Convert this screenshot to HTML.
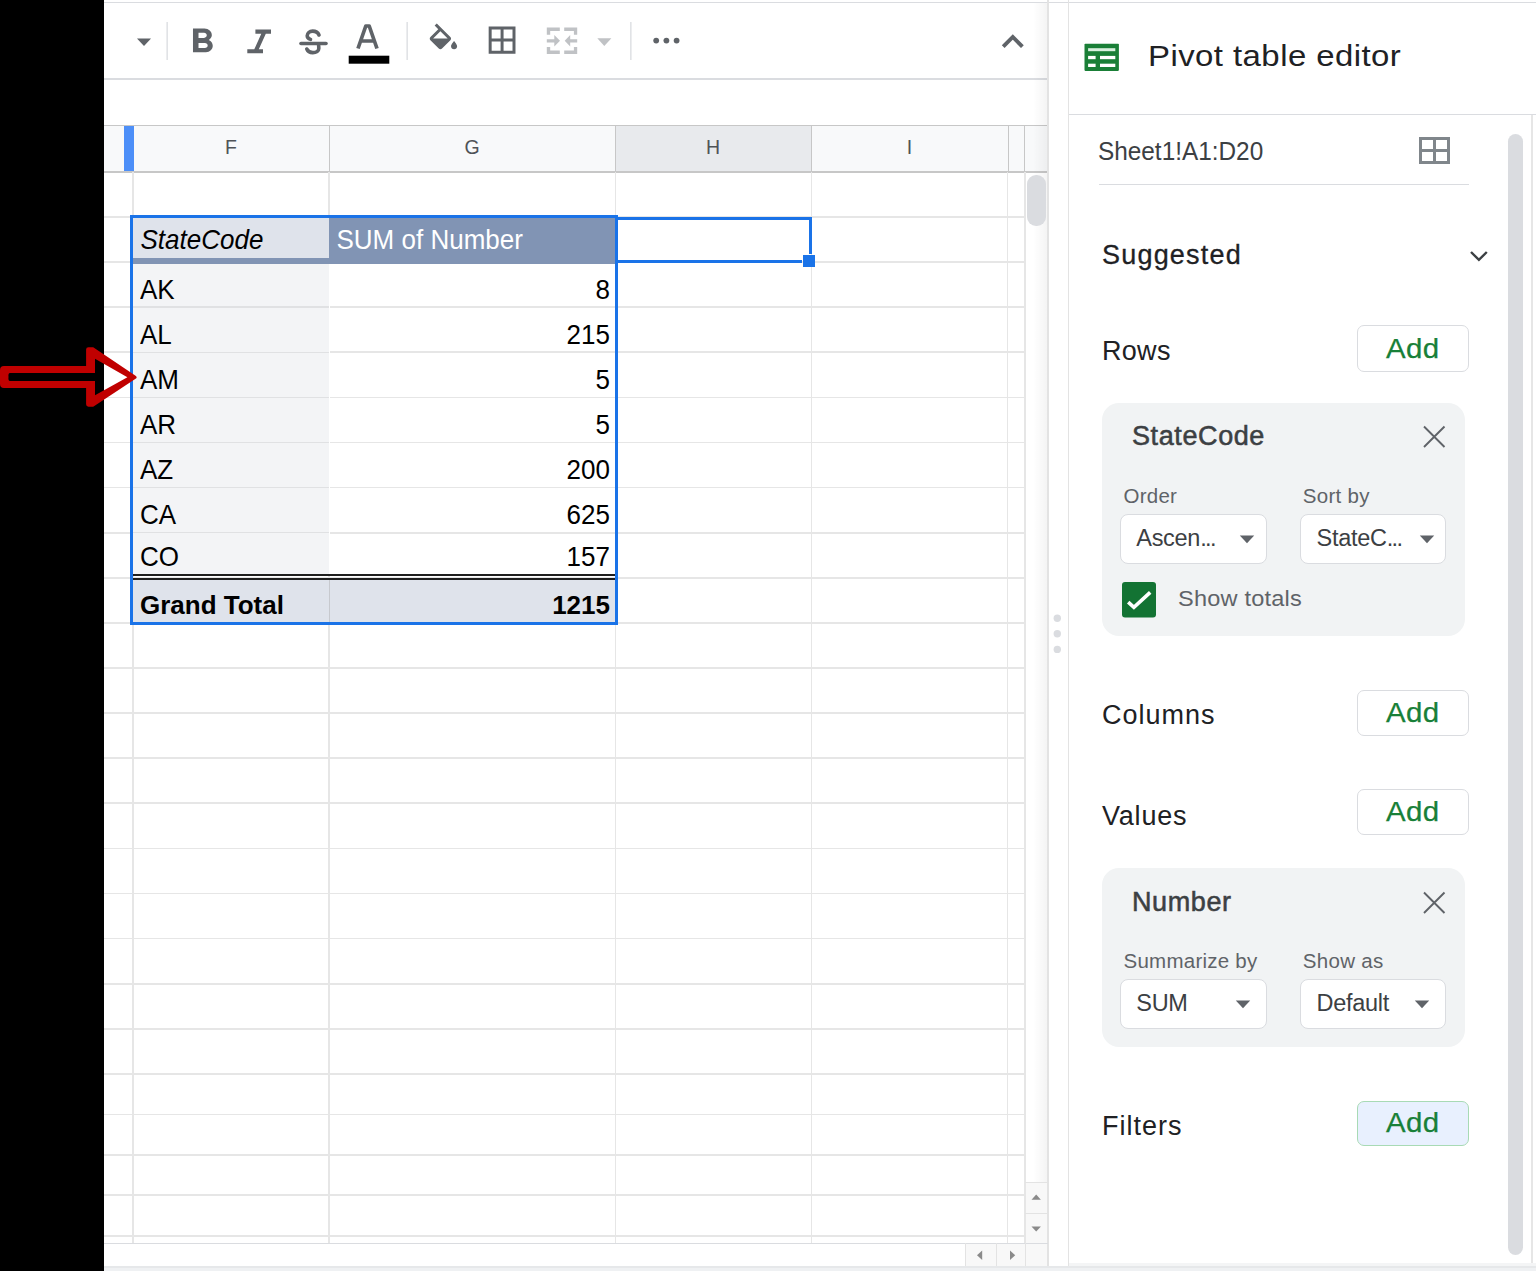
<!DOCTYPE html><html><head><meta charset="utf-8"><style>
html,body{margin:0;padding:0}
body{width:1536px;height:1271px;position:relative;overflow:hidden;background:#fff;font-family:'Liberation Sans', sans-serif}
div{box-sizing:border-box}
</style></head><body>
<div style="position:absolute;left:104px;top:0px;width:1432px;height:1.5px;background:#fff;"></div>
<div style="position:absolute;left:104px;top:1.5px;width:1432px;height:1.6px;background:#dadce0;"></div>
<div style="position:absolute;left:104px;top:78px;width:943.5px;height:1.5px;background:#dadce0;"></div>
<svg style="position:absolute;left:0;top:0" width="1048" height="80" viewBox="0 0 1048 80">
<path d="M137 38.5 L151 38.5 L144 46 Z" fill="#5f6368"/>
<rect x="166.5" y="22" width="1.3" height="38" fill="#dadce0"/>
<rect x="406.5" y="22" width="1.3" height="38" fill="#dadce0"/>
<rect x="630.2" y="22" width="1.3" height="38" fill="#dadce0"/>
<!-- B -->
<path transform="translate(180.1 21.84) scale(1.84 1.69)" fill="#5f6368" d="M15.6 10.79c.97-.67 1.65-1.77 1.65-2.79 0-2.26-1.75-4-4-4H7v14h7.04c2.09 0 3.71-1.7 3.71-3.79 0-1.52-.86-2.82-2.15-3.42zM10 6.5h3c.83 0 1.5.67 1.5 1.5s-.67 1.5-1.5 1.5h-3v-3zm3.5 9H10v-3h3.5c.83 0 1.5.67 1.5 1.5s-.67 1.5-1.5 1.5z"/>
<!-- I -->
<path d="M255.4 31.6 H271 M247.3 51.2 H263 M264.5 31.6 L255.7 51.2" stroke="#5f6368" stroke-width="4.1" fill="none"/>
<!-- S -->
<g stroke="#5f6368" stroke-width="3.6" fill="none" stroke-linecap="round">
<path d="M319 35 C318 32.5 315.5 31.1 312.6 31.1 C309.5 31.1 307.2 33.2 307.2 35.8 C307.2 37.6 308.6 38.8 310.5 39.4"/>
<path d="M318.6 45.5 C318.8 46.5 318.8 47.5 318.8 48.4 C318.8 51 316.2 52.6 312.8 52.6 C309.8 52.6 307.6 51 306.8 49"/>
<path d="M301 43.5 H326"/>
</g>
<!-- A -->
<path d="M358 48.5 L365.8 26 L369.2 26 L377 48.5 M360.5 41 L374.5 41" stroke="#5f6368" stroke-width="3.7" fill="none" stroke-linejoin="round"/>
<rect x="348.7" y="55.7" width="40.6" height="8" fill="#000"/>
<!-- paint bucket -->
<path transform="translate(425.2 23.4) scale(1.52)" fill="#5f6368" d="M16.56 8.94L7.62 0 6.21 1.41l2.38 2.38-5.15 5.150c-.59.59-.59 1.54 0 2.12l5.5 5.5c.29.29.68.44 1.06.44s.77-.15 1.06-.44l5.5-5.5c.59-.58.59-1.530 0-2.12zM5.21 10L10 5.21 14.79 10H5.21zM19 11.5s-2 2.17-2 3.5c0 1.1.9 2 2 2s2-.9 2-2c0-1.33-2-3.5-2-3.5z"/>
<!-- borders grid -->
<path transform="translate(484.2 21.85) scale(1.49 1.52)" fill="#5f6368" d="M3 3v18h18V3H3zm8 16H5v-6h6v6zm0-8H5V5h6v6zm8 8h-6v-6h6v6zm0-8h-6V5h6v6z"/>
<!-- merge (disabled) -->
<g fill="#c0c2c5">
<path d="M546.8 34.8 V27.6 H559.8 V30.9 H550.2 V34.8 Z"/>
<path d="M577.2 34.8 V27.6 H564.2 V30.9 H573.9 V34.8 Z"/>
<path d="M546.8 47 V53.9 H559.8 V50.5 H550.2 V47 Z"/>
<path d="M577.2 47 V53.9 H564.2 V50.5 H573.9 V47 Z"/>
<path d="M546.8 39.3 H554.3 V35.1 L560 40.8 L554.3 46.6 V42.4 H546.8 Z"/>
<path d="M577.2 39.3 H570.2 V35.1 L564.7 40.8 L570.2 46.6 V42.4 H577.2 Z"/>
</g>
<path d="M597.3 38.2 L611.4 38.2 L604.3 46 Z" fill="#c0c2c5"/>
<!-- more -->
<g fill="#5f6368"><circle cx="656.2" cy="40.6" r="2.9"/><circle cx="666.4" cy="40.6" r="2.9"/><circle cx="676.6" cy="40.6" r="2.9"/></g>
<!-- chevron up -->
<path d="M1003.2 46.7 L1012.8 37 L1022.4 46.7" stroke="#5f6368" stroke-width="3.9" fill="none"/>
</svg>
<div style="position:absolute;left:104px;top:125px;width:943.5px;height:47px;background:#f8f9fa;"></div>
<div style="position:absolute;left:615px;top:125px;width:196px;height:47px;background:#e8eaed;"></div>
<div style="position:absolute;left:104px;top:124.5px;width:943.5px;height:1.5px;background:#c7c7c7;"></div>
<div style="position:absolute;left:104px;top:171px;width:943.5px;height:1.5px;background:#c7c7c7;"></div>
<div style="position:absolute;left:124px;top:126px;width:9.5px;height:45px;background:#4d8ff8;"></div>
<div style="position:absolute;left:328.5px;top:126px;width:1.2px;height:45px;background:#c7c7c7;"></div>
<div style="position:absolute;left:615px;top:126px;width:1.2px;height:45px;background:#c7c7c7;"></div>
<div style="position:absolute;left:811px;top:126px;width:1.2px;height:45px;background:#c7c7c7;"></div>
<div style="position:absolute;left:1007.5px;top:126px;width:1.2px;height:45px;background:#c7c7c7;"></div>
<div style="position:absolute;left:1024.2px;top:126px;width:1.2px;height:45px;background:#c7c7c7;"></div>
<div style="position:absolute;left:31.00px;width:400px;text-align:center;top:138.49px;font-size:19.5px;line-height:19.5px;color:#4f5357;font-weight:normal;font-style:normal;letter-spacing:0px;white-space:nowrap;">F</div>
<div style="position:absolute;left:272.00px;width:400px;text-align:center;top:138.49px;font-size:19.5px;line-height:19.5px;color:#4f5357;font-weight:normal;font-style:normal;letter-spacing:0px;white-space:nowrap;">G</div>
<div style="position:absolute;left:513.00px;width:400px;text-align:center;top:138.49px;font-size:19.5px;line-height:19.5px;color:#4f5357;font-weight:normal;font-style:normal;letter-spacing:0px;white-space:nowrap;">H</div>
<div style="position:absolute;left:709.50px;width:400px;text-align:center;top:138.49px;font-size:19.5px;line-height:19.5px;color:#4f5357;font-weight:normal;font-style:normal;letter-spacing:0px;white-space:nowrap;">I</div>
<div style="position:absolute;left:104px;top:216.1px;width:921px;height:1.8px;background:#e6e6e6;"></div>
<div style="position:absolute;left:104px;top:261.20000000000005px;width:921px;height:1.8px;background:#e6e6e6;"></div>
<div style="position:absolute;left:104px;top:306.3px;width:921px;height:1.8px;background:#e6e6e6;"></div>
<div style="position:absolute;left:104px;top:351.40000000000003px;width:921px;height:1.8px;background:#e6e6e6;"></div>
<div style="position:absolute;left:104px;top:396.5px;width:921px;height:1.8px;background:#e6e6e6;"></div>
<div style="position:absolute;left:104px;top:441.6px;width:921px;height:1.8px;background:#e6e6e6;"></div>
<div style="position:absolute;left:104px;top:486.70000000000005px;width:921px;height:1.8px;background:#e6e6e6;"></div>
<div style="position:absolute;left:104px;top:531.8000000000001px;width:921px;height:1.8px;background:#e6e6e6;"></div>
<div style="position:absolute;left:104px;top:576.9px;width:921px;height:1.8px;background:#e6e6e6;"></div>
<div style="position:absolute;left:104px;top:622.0000000000001px;width:921px;height:1.8px;background:#e6e6e6;"></div>
<div style="position:absolute;left:104px;top:667.1px;width:921px;height:1.8px;background:#e6e6e6;"></div>
<div style="position:absolute;left:104px;top:712.2px;width:921px;height:1.8px;background:#e6e6e6;"></div>
<div style="position:absolute;left:104px;top:757.3000000000001px;width:921px;height:1.8px;background:#e6e6e6;"></div>
<div style="position:absolute;left:104px;top:802.4000000000001px;width:921px;height:1.8px;background:#e6e6e6;"></div>
<div style="position:absolute;left:104px;top:847.5px;width:921px;height:1.8px;background:#e6e6e6;"></div>
<div style="position:absolute;left:104px;top:892.6px;width:921px;height:1.8px;background:#e6e6e6;"></div>
<div style="position:absolute;left:104px;top:937.7px;width:921px;height:1.8px;background:#e6e6e6;"></div>
<div style="position:absolute;left:104px;top:982.8000000000001px;width:921px;height:1.8px;background:#e6e6e6;"></div>
<div style="position:absolute;left:104px;top:1027.9px;width:921px;height:1.8px;background:#e6e6e6;"></div>
<div style="position:absolute;left:104px;top:1073.0px;width:921px;height:1.8px;background:#e6e6e6;"></div>
<div style="position:absolute;left:104px;top:1113.6px;width:921px;height:1.8px;background:#e6e6e6;"></div>
<div style="position:absolute;left:104px;top:1154.1px;width:921px;height:1.8px;background:#e6e6e6;"></div>
<div style="position:absolute;left:104px;top:1194.3999999999999px;width:921px;height:1.8px;background:#e6e6e6;"></div>
<div style="position:absolute;left:104px;top:1234.8999999999999px;width:921px;height:1.8px;background:#e6e6e6;"></div>
<div style="position:absolute;left:132.29999999999998px;top:172px;width:1.8px;height:1071px;background:#e6e6e6;"></div>
<div style="position:absolute;left:328.1px;top:172px;width:1.8px;height:1071px;background:#e6e6e6;"></div>
<div style="position:absolute;left:614.6px;top:172px;width:1.8px;height:1071px;background:#e6e6e6;"></div>
<div style="position:absolute;left:810.6px;top:172px;width:1.8px;height:1071px;background:#e6e6e6;"></div>
<div style="position:absolute;left:1006.6px;top:172px;width:1.8px;height:1071px;background:#e6e6e6;"></div>
<div style="position:absolute;left:1023.9px;top:172px;width:1.8px;height:1071px;background:#e6e6e6;"></div>
<div style="position:absolute;left:104px;top:1242.5px;width:921px;height:1.5px;background:#dadce0;"></div>
<div style="position:absolute;left:131px;top:217px;width:197.5px;height:41px;background:#dfe3eb;"></div>
<div style="position:absolute;left:328.5px;top:217px;width:286px;height:41px;background:#8194b4;"></div>
<div style="position:absolute;left:131px;top:258px;width:484px;height:6px;background:#8194b4;"></div>
<div style="position:absolute;left:131px;top:264px;width:197.5px;height:310px;background:#f3f4f6;"></div>
<div style="position:absolute;left:328.5px;top:264px;width:1.5px;height:310px;background:#fff;"></div>
<div style="position:absolute;left:131px;top:579px;width:484px;height:43px;background:#dfe3eb;"></div>
<div style="position:absolute;left:328.5px;top:579px;width:1px;height:43px;background:#c7c9ce;"></div>
<div style="position:absolute;left:131px;top:306.4px;width:197.5px;height:1.6px;background:#e0e1e3;"></div>
<div style="position:absolute;left:131px;top:351.5px;width:197.5px;height:1.6px;background:#e0e1e3;"></div>
<div style="position:absolute;left:131px;top:396.59999999999997px;width:197.5px;height:1.6px;background:#e0e1e3;"></div>
<div style="position:absolute;left:131px;top:441.7px;width:197.5px;height:1.6px;background:#e0e1e3;"></div>
<div style="position:absolute;left:131px;top:486.8px;width:197.5px;height:1.6px;background:#e0e1e3;"></div>
<div style="position:absolute;left:131px;top:531.9000000000001px;width:197.5px;height:1.6px;background:#e0e1e3;"></div>
<div style="position:absolute;left:131px;top:573.5px;width:484px;height:2px;background:#1f1f1f;"></div>
<div style="position:absolute;left:131px;top:578px;width:484px;height:2px;background:#1f1f1f;"></div>
<div style="position:absolute;left:129.5px;top:214.5px;width:488px;height:3px;background:#1a73e8;"></div>
<div style="position:absolute;left:129.5px;top:621.5px;width:488px;height:3px;background:#1a73e8;"></div>
<div style="position:absolute;left:129.5px;top:214.5px;width:3px;height:410px;background:#1a73e8;"></div>
<div style="position:absolute;left:614.5px;top:214.5px;width:3px;height:410px;background:#1a73e8;"></div>
<div style="position:absolute;left:614.5px;top:216.5px;width:197.5px;height:3px;background:#1a73e8;"></div>
<div style="position:absolute;left:614.5px;top:259.5px;width:187px;height:3px;background:#1a73e8;"></div>
<div style="position:absolute;left:809.2px;top:216.5px;width:3px;height:37px;background:#1a73e8;"></div>
<div style="position:absolute;left:803px;top:255px;width:12.3px;height:12.3px;background:#1a73e8;"></div>
<div style="position:absolute;left:140.50px;top:226.99px;font-size:26px;line-height:26px;color:#000;font-weight:normal;font-style:italic;letter-spacing:0px;white-space:nowrap;transform:scaleY(1.04);transform-origin:0 22.01px;">StateCode</div>
<div style="position:absolute;left:336.50px;top:226.99px;font-size:26px;line-height:26px;color:#fff;font-weight:normal;font-style:normal;letter-spacing:0px;white-space:nowrap;transform:scaleY(1.06);transform-origin:0 22.01px;">SUM of Number</div>
<div style="position:absolute;left:140.00px;top:276.99px;font-size:26px;line-height:26px;color:#000;font-weight:normal;font-style:normal;letter-spacing:0px;white-space:nowrap;transform:scaleY(1.06);transform-origin:0 22.01px;">AK</div>
<div style="position:absolute;right:926.00px;top:276.99px;font-size:26px;line-height:26px;color:#000;font-weight:normal;font-style:normal;letter-spacing:0px;white-space:nowrap;transform:scaleY(1.06);transform-origin:0 22.01px;">8</div>
<div style="position:absolute;left:140.00px;top:322.09px;font-size:26px;line-height:26px;color:#000;font-weight:normal;font-style:normal;letter-spacing:0px;white-space:nowrap;transform:scaleY(1.06);transform-origin:0 22.01px;">AL</div>
<div style="position:absolute;right:926.00px;top:322.09px;font-size:26px;line-height:26px;color:#000;font-weight:normal;font-style:normal;letter-spacing:0px;white-space:nowrap;transform:scaleY(1.06);transform-origin:0 22.01px;">215</div>
<div style="position:absolute;left:140.00px;top:367.19px;font-size:26px;line-height:26px;color:#000;font-weight:normal;font-style:normal;letter-spacing:0px;white-space:nowrap;transform:scaleY(1.06);transform-origin:0 22.01px;">AM</div>
<div style="position:absolute;right:926.00px;top:367.19px;font-size:26px;line-height:26px;color:#000;font-weight:normal;font-style:normal;letter-spacing:0px;white-space:nowrap;transform:scaleY(1.06);transform-origin:0 22.01px;">5</div>
<div style="position:absolute;left:140.00px;top:412.29px;font-size:26px;line-height:26px;color:#000;font-weight:normal;font-style:normal;letter-spacing:0px;white-space:nowrap;transform:scaleY(1.06);transform-origin:0 22.01px;">AR</div>
<div style="position:absolute;right:926.00px;top:412.29px;font-size:26px;line-height:26px;color:#000;font-weight:normal;font-style:normal;letter-spacing:0px;white-space:nowrap;transform:scaleY(1.06);transform-origin:0 22.01px;">5</div>
<div style="position:absolute;left:140.00px;top:457.39px;font-size:26px;line-height:26px;color:#000;font-weight:normal;font-style:normal;letter-spacing:0px;white-space:nowrap;transform:scaleY(1.06);transform-origin:0 22.01px;">AZ</div>
<div style="position:absolute;right:926.00px;top:457.39px;font-size:26px;line-height:26px;color:#000;font-weight:normal;font-style:normal;letter-spacing:0px;white-space:nowrap;transform:scaleY(1.06);transform-origin:0 22.01px;">200</div>
<div style="position:absolute;left:140.00px;top:502.49px;font-size:26px;line-height:26px;color:#000;font-weight:normal;font-style:normal;letter-spacing:0px;white-space:nowrap;transform:scaleY(1.06);transform-origin:0 22.01px;">CA</div>
<div style="position:absolute;right:926.00px;top:502.49px;font-size:26px;line-height:26px;color:#000;font-weight:normal;font-style:normal;letter-spacing:0px;white-space:nowrap;transform:scaleY(1.06);transform-origin:0 22.01px;">625</div>
<div style="position:absolute;left:140.00px;top:544.29px;font-size:26px;line-height:26px;color:#000;font-weight:normal;font-style:normal;letter-spacing:0px;white-space:nowrap;transform:scaleY(1.06);transform-origin:0 22.01px;">CO</div>
<div style="position:absolute;right:926.00px;top:544.29px;font-size:26px;line-height:26px;color:#000;font-weight:normal;font-style:normal;letter-spacing:0px;white-space:nowrap;transform:scaleY(1.06);transform-origin:0 22.01px;">157</div>
<div style="position:absolute;left:140.00px;top:591.99px;font-size:26px;line-height:26px;color:#000;font-weight:bold;font-style:normal;letter-spacing:0px;white-space:nowrap;">Grand Total</div>
<div style="position:absolute;right:926.00px;top:591.99px;font-size:26px;line-height:26px;color:#000;font-weight:bold;font-style:normal;letter-spacing:0px;white-space:nowrap;">1215</div>
<div style="position:absolute;left:1033px;top:3px;width:14px;height:1240px;background:linear-gradient(to right,rgba(0,0,0,0),rgba(0,0,0,0.045))"></div>
<div style="position:absolute;left:1047px;top:0px;width:1.5px;height:1266px;background:#e3e3e3;"></div>
<div style="position:absolute;left:1027px;top:174.5px;width:18.5px;height:51px;background:#dadce0;border-radius:9px"></div>
<div style="position:absolute;left:1026px;top:1182px;width:21px;height:61px;background:#f8f8f8;"></div>
<div style="position:absolute;left:966px;top:1244px;width:81px;height:22px;background:#f8f8f8;"></div>
<div style="position:absolute;left:1025px;top:1182px;width:22px;height:1.2px;background:#e3e3e3;"></div>
<div style="position:absolute;left:1025px;top:1213px;width:22px;height:1.2px;background:#e3e3e3;"></div>
<div style="position:absolute;left:1025px;top:1242.5px;width:23px;height:1.5px;background:#dadce0;"></div>
<div style="position:absolute;left:965px;top:1243px;width:1.2px;height:23px;background:#e3e3e3;"></div>
<div style="position:absolute;left:996px;top:1243px;width:1.2px;height:23px;background:#e3e3e3;"></div>
<div style="position:absolute;left:1024.5px;top:1243px;width:1.2px;height:23px;background:#e3e3e3;"></div>
<svg style="position:absolute;left:960px;top:1175px" width="90" height="95" viewBox="960 1175 90 95">
<path d="M1031.5 1199.8 L1040.9 1199.8 L1036.2 1194.6 Z" fill="#8a8a8a"/>
<path d="M1031.5 1226.4 L1040.9 1226.4 L1036.2 1231.6 Z" fill="#8a8a8a"/>
<path d="M982.2 1250.5 L982.2 1260 L977 1255.2 Z" fill="#8a8a8a"/>
<path d="M1010 1250.5 L1010 1260 L1015.2 1255.2 Z" fill="#8a8a8a"/>
</svg>
<div style="position:absolute;left:104px;top:1266px;width:1432px;height:5px;background:#f1f3f4;"></div>
<div style="position:absolute;left:1067.6px;top:0px;width:1.5px;height:1266px;background:#e3e3e3;"></div>
<div style="position:absolute;left:1069px;top:113.5px;width:467px;height:1.5px;background:#dadce0;"></div>
<svg style="position:absolute;left:1050px;top:610px" width="16" height="48" viewBox="1050 610 16 48"><g fill="#dadce0"><circle cx="1057.3" cy="618.3" r="3.7"/><circle cx="1057.3" cy="633.8" r="3.7"/><circle cx="1057.3" cy="649.4" r="3.7"/></g></svg>
<svg style="position:absolute;left:1080px;top:38px" width="45" height="38" viewBox="1080 38 45 38">
<rect x="1084.5" y="43.7" width="34.4" height="27.2" rx="0.8" fill="#1a7f37"/>
<rect x="1088.1" y="48.2" width="27.2" height="3" fill="#d9f0df"/>
<rect x="1088.1" y="55.9" width="7.5" height="3.3" fill="#fff"/>
<rect x="1100" y="55.9" width="15.3" height="3.3" fill="#fff"/>
<rect x="1088.1" y="63.7" width="7.5" height="3.3" fill="#fff"/>
<rect x="1100" y="63.7" width="15.3" height="3.3" fill="#fff"/>
</svg>
<div style="position:absolute;left:1147.80px;top:41.31px;font-size:30px;line-height:30px;color:#202124;font-weight:normal;font-style:normal;letter-spacing:0.4px;white-space:nowrap;transform:scaleX(1.098);transform-origin:0 0">Pivot table editor</div>
<div style="position:absolute;left:1097.50px;top:138.91px;font-size:25.5px;line-height:25.5px;color:#3c4043;font-weight:normal;font-style:normal;letter-spacing:0px;white-space:nowrap;transform:scaleX(0.955);transform-origin:0 0">Sheet1!A1:D20</div>
<svg style="position:absolute;left:1419px;top:137px" width="32" height="28" viewBox="0 0 32 28">
<g fill="none" stroke="#80868b" stroke-width="3"><rect x="1.5" y="1.5" width="28" height="24"/><path d="M15.5 1.5 V25.5 M1.5 13.5 H29.5"/></g></svg>
<div style="position:absolute;left:1098.5px;top:183.5px;width:370.5px;height:1.5px;background:#dadce0;"></div>
<div style="position:absolute;left:1102.00px;top:242.14px;font-size:27px;line-height:27px;color:#202124;font-weight:normal;font-style:normal;letter-spacing:1.2px;white-space:nowrap;-webkit-text-stroke:0.3px #202124">Suggested</div>
<svg style="position:absolute;left:1468px;top:248px" width="22" height="18" viewBox="0 0 22 18">
<path d="M3 4 L10.9 11.9 L18.8 4" stroke="#3c4043" stroke-width="2.4" fill="none"/></svg>
<div style="position:absolute;left:1102.00px;top:337.94px;font-size:27px;line-height:27px;color:#202124;font-weight:normal;font-style:normal;letter-spacing:0.3px;white-space:nowrap;">Rows</div>
<div style="position:absolute;left:1357px;top:325px;width:112px;height:46.5px;background:#fff;border:1.6px solid #dadce0;border-radius:7px"></div>
<div style="position:absolute;left:1385.50px;top:334.72px;font-size:27.5px;line-height:27.5px;color:#188038;font-weight:normal;font-style:normal;letter-spacing:0.3px;white-space:nowrap;transform:scaleX(1.07);transform-origin:0 0;-webkit-text-stroke:0.25px #188038">Add</div>
<div style="position:absolute;left:1102.00px;top:702.34px;font-size:27px;line-height:27px;color:#202124;font-weight:normal;font-style:normal;letter-spacing:1.0px;white-space:nowrap;">Columns</div>
<div style="position:absolute;left:1357px;top:689.5px;width:112px;height:46.0px;background:#fff;border:1.6px solid #dadce0;border-radius:7px"></div>
<div style="position:absolute;left:1385.50px;top:698.72px;font-size:27.5px;line-height:27.5px;color:#188038;font-weight:normal;font-style:normal;letter-spacing:0.3px;white-space:nowrap;transform:scaleX(1.07);transform-origin:0 0;-webkit-text-stroke:0.25px #188038">Add</div>
<div style="position:absolute;left:1102.00px;top:802.64px;font-size:27px;line-height:27px;color:#202124;font-weight:normal;font-style:normal;letter-spacing:0.8px;white-space:nowrap;">Values</div>
<div style="position:absolute;left:1357px;top:789px;width:112px;height:46px;background:#fff;border:1.6px solid #dadce0;border-radius:7px"></div>
<div style="position:absolute;left:1385.50px;top:798.22px;font-size:27.5px;line-height:27.5px;color:#188038;font-weight:normal;font-style:normal;letter-spacing:0.3px;white-space:nowrap;transform:scaleX(1.07);transform-origin:0 0;-webkit-text-stroke:0.25px #188038">Add</div>
<div style="position:absolute;left:1102.00px;top:1113.14px;font-size:27px;line-height:27px;color:#202124;font-weight:normal;font-style:normal;letter-spacing:1.0px;white-space:nowrap;">Filters</div>
<div style="position:absolute;left:1357px;top:1100.5px;width:112px;height:45.200000000000045px;background:#e8f0fe;border:1.6px solid #a8dab5;border-radius:7px"></div>
<div style="position:absolute;left:1385.50px;top:1108.92px;font-size:27.5px;line-height:27.5px;color:#188038;font-weight:normal;font-style:normal;letter-spacing:0.3px;white-space:nowrap;transform:scaleX(1.07);transform-origin:0 0;-webkit-text-stroke:0.25px #188038">Add</div>
<div style="position:absolute;left:1102px;top:402.5px;width:362.5px;height:233.5px;background:#f1f3f4;border-radius:17px"></div>
<div style="position:absolute;left:1132.00px;top:423.14px;font-size:27px;line-height:27px;color:#3c4043;font-weight:normal;font-style:normal;letter-spacing:0.6px;white-space:nowrap;-webkit-text-stroke:0.55px #3c4043">StateCode</div>
<svg style="position:absolute;left:1420px;top:423px" width="30" height="28" viewBox="0 0 30 28">
<path d="M4 3.5 L24.5 24 M24.5 3.5 L4 24" stroke="#5f6368" stroke-width="1.9" fill="none"/></svg>
<div style="position:absolute;left:1123.50px;top:486.35px;font-size:20.5px;line-height:20.5px;color:#5f6368;font-weight:normal;font-style:normal;letter-spacing:0.25px;white-space:nowrap;">Order</div>
<div style="position:absolute;left:1302.80px;top:486.35px;font-size:20.5px;line-height:20.5px;color:#5f6368;font-weight:normal;font-style:normal;letter-spacing:0.3px;white-space:nowrap;">Sort by</div>
<div style="position:absolute;left:1120px;top:513.8px;width:147.3px;height:50.200000000000045px;background:#fff;border:1.3px solid #dadce0;border-radius:8px"></div>
<div style="position:absolute;left:1136.30px;top:526.71px;font-size:23.5px;line-height:23.5px;color:#3c4043;font-weight:normal;font-style:normal;letter-spacing:-0.3px;white-space:nowrap;">Ascen<span style="letter-spacing:-1.6px">...</span></div>
<svg style="position:absolute;left:1239.3px;top:530.9px" width="16" height="16" viewBox="0 0 16 16">
<path d="M0.8 4.5 L15.2 4.5 L8 12.3 Z" fill="#5f6368"/></svg>
<div style="position:absolute;left:1300.3px;top:513.8px;width:146.2px;height:50.200000000000045px;background:#fff;border:1.3px solid #dadce0;border-radius:8px"></div>
<div style="position:absolute;left:1316.60px;top:526.71px;font-size:23.5px;line-height:23.5px;color:#3c4043;font-weight:normal;font-style:normal;letter-spacing:-0.3px;white-space:nowrap;">StateC<span style="letter-spacing:-1.6px">...</span></div>
<svg style="position:absolute;left:1418.5px;top:530.9px" width="16" height="16" viewBox="0 0 16 16">
<path d="M0.8 4.5 L15.2 4.5 L8 12.3 Z" fill="#5f6368"/></svg>
<div style="position:absolute;left:1102px;top:868px;width:362.5px;height:178.5px;background:#f1f3f4;border-radius:17px"></div>
<div style="position:absolute;left:1132.00px;top:889.14px;font-size:27px;line-height:27px;color:#3c4043;font-weight:normal;font-style:normal;letter-spacing:0.6px;white-space:nowrap;-webkit-text-stroke:0.55px #3c4043">Number</div>
<svg style="position:absolute;left:1420px;top:889px" width="30" height="28" viewBox="0 0 30 28">
<path d="M4 3.5 L24.5 24 M24.5 3.5 L4 24" stroke="#5f6368" stroke-width="1.9" fill="none"/></svg>
<div style="position:absolute;left:1123.50px;top:950.65px;font-size:20.5px;line-height:20.5px;color:#5f6368;font-weight:normal;font-style:normal;letter-spacing:0.25px;white-space:nowrap;">Summarize by</div>
<div style="position:absolute;left:1302.80px;top:950.65px;font-size:20.5px;line-height:20.5px;color:#5f6368;font-weight:normal;font-style:normal;letter-spacing:0.3px;white-space:nowrap;">Show as</div>
<div style="position:absolute;left:1120px;top:979.3px;width:147.3px;height:49.700000000000045px;background:#fff;border:1.3px solid #dadce0;border-radius:8px"></div>
<div style="position:absolute;left:1136.30px;top:992.11px;font-size:23.5px;line-height:23.5px;color:#3c4043;font-weight:normal;font-style:normal;letter-spacing:-0.3px;white-space:nowrap;">SUM</div>
<svg style="position:absolute;left:1234.6px;top:996.15px" width="16" height="16" viewBox="0 0 16 16">
<path d="M0.8 4.5 L15.2 4.5 L8 12.3 Z" fill="#5f6368"/></svg>
<div style="position:absolute;left:1300.3px;top:979.3px;width:146.2px;height:49.700000000000045px;background:#fff;border:1.3px solid #dadce0;border-radius:8px"></div>
<div style="position:absolute;left:1316.60px;top:992.11px;font-size:23.5px;line-height:23.5px;color:#3c4043;font-weight:normal;font-style:normal;letter-spacing:-0.3px;white-space:nowrap;">Default</div>
<svg style="position:absolute;left:1413.8px;top:996.15px" width="16" height="16" viewBox="0 0 16 16">
<path d="M0.8 4.5 L15.2 4.5 L8 12.3 Z" fill="#5f6368"/></svg>
<svg style="position:absolute;left:1122px;top:582px" width="35" height="36" viewBox="0 0 35 36">
<rect x="0" y="0" width="34" height="35.4" rx="3" fill="#137333"/>
<path d="M6.2 20.2 L11.9 25.4 L28.2 10.4" stroke="#fff" stroke-width="3.6" fill="none"/></svg>
<div style="position:absolute;left:1177.50px;top:587.98px;font-size:22px;line-height:22px;color:#5f6368;font-weight:normal;font-style:normal;letter-spacing:0.2px;white-space:nowrap;transform:scaleX(1.07);transform-origin:0 0">Show totals</div>
<div style="position:absolute;left:1508.3px;top:134px;width:15px;height:1121px;background:#dadce0;border-radius:8px"></div>
<div style="position:absolute;left:1531.4px;top:115px;width:1.6px;height:1150px;background:#e6e6e6;"></div>
<div style="position:absolute;left:1069px;top:1263px;width:467px;height:3.5px;background:#f4f5f6;"></div>
<div style="position:absolute;left:104px;top:1266.4px;width:1432px;height:4.6px;background:#eff1f3;"></div>
<div style="position:absolute;left:104px;top:1266.4px;width:1432px;height:1.2px;background:#e6e8ea;"></div>
<div style="position:absolute;left:0px;top:0px;width:104px;height:1271px;background:#000;"></div>
<svg style="position:absolute;left:0;top:0" width="150" height="420" viewBox="0 0 150 420">
<path fill-rule="evenodd" fill="#c00000" d="M0 370 Q0 366 4 366 L86.1 366 L86.1 349.5 Q86.1 347.2 88.5 347.2 L93.2 347.2 L135.2 375.5 Q138.2 377.3 135.2 379.1 L93.2 406.7 L88.5 406.7 Q86.1 406.7 86.1 404.3 L86.1 388 L4 388 Q0 388 0 384 Z M10 372.9 L95 372.9 L95 358.8 L127.4 377.3 L95 395.2 L95 381.1 L10 381.1 Q8 381.1 8.5 377 Q8 372.9 10 372.9 Z"/></svg>
</body></html>
